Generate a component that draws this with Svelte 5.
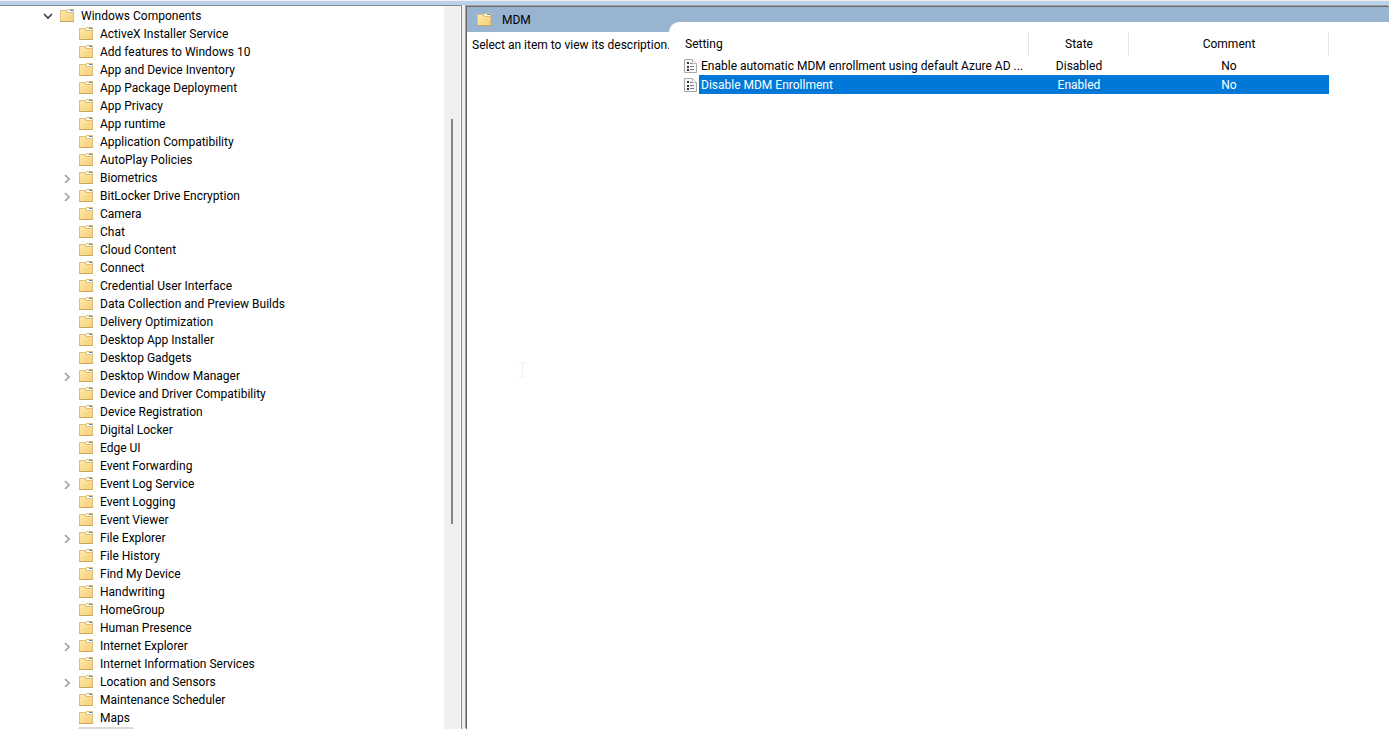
<script>
	const items = [
		'ActiveX Installer Service',
		'Add features to Windows 10',
		'App and Device Inventory',
		'App Package Deployment',
		'App Privacy',
		'App runtime',
		'Application Compatibility',
		'AutoPlay Policies',
		'Biometrics',
		'BitLocker Drive Encryption',
		'Camera',
		'Chat',
		'Cloud Content',
		'Connect',
		'Credential User Interface',
		'Data Collection and Preview Builds',
		'Delivery Optimization',
		'Desktop App Installer',
		'Desktop Gadgets',
		'Desktop Window Manager',
		'Device and Driver Compatibility',
		'Device Registration',
		'Digital Locker',
		'Edge UI',
		'Event Forwarding',
		'Event Log Service',
		'Event Logging',
		'Event Viewer',
		'File Explorer',
		'File History',
		'Find My Device',
		'Handwriting',
		'HomeGroup',
		'Human Presence',
		'Internet Explorer',
		'Internet Information Services',
		'Location and Sensors',
		'Maintenance Scheduler',
		'Maps'
	];
	const expandable = [
		'Biometrics',
		'BitLocker Drive Encryption',
		'Desktop Window Manager',
		'Event Log Service',
		'File Explorer',
		'Internet Explorer',
		'Location and Sensors'
	];
	const settings = [
		{ name: 'Enable automatic MDM enrollment using default Azure AD ...', state: 'Disabled', comment: 'No' },
		{ name: 'Disable MDM Enrollment', state: 'Enabled', comment: 'No' }
	];

	let open = $state(true);
	let selected = $state(1);
</script>

{#snippet folder()}
	<svg class="folder" width="16" height="16" viewBox="0 0 16 16" aria-hidden="true">
		<defs>
			<linearGradient id="fill" x1="0" y1="0" x2="1" y2="1">
				<stop offset="0" stop-color="#ffe9ab" />
				<stop offset="1" stop-color="#f5d078" />
			</linearGradient>
		</defs>
		<path d="M7.5 5.5v-3l1-1h6v4" fill="#f4e2b0" stroke="#d9bd7c" />
		<path d="M9 2h5v2H9z" fill="#fff" />
		<path d="M11 2h3v1h-3z" fill="#3b93df" />
		<path d="M1.5 2.5h5l1.5 2h6.5v9h-13z" fill="url(#fill)" stroke="#dfc07a" />
		<path d="M1 13.5h14" fill="none" stroke="#c9a65a" />
	</svg>
{/snippet}

<main>
	<nav class="tree" aria-label="Policy folders">
		<div class="nodes">
			<div class="node root">
				<button class="toggle" aria-label="Toggle Windows Components" aria-expanded={open} onclick={() => (open = !open)}>
					<svg width="10" height="10" viewBox="0 0 10 10"><path d="M1 3l4 4 4-4" fill="none" stroke="#404040" stroke-width="1.7" /></svg>
				</button>
				{@render folder()}
				<span>Windows Components</span>
			</div>
			{#if open}
				<ul>
					{#each items as item}
						<li class="node">
							{#if expandable.includes(item)}
								<button class="toggle" aria-label="Expand {item}">
									<svg width="10" height="10" viewBox="0 0 10 10"><path d="M3 2l4 4-4 4" fill="none" stroke="#a0a0a0" stroke-width="1.7" /></svg>
								</button>
							{:else}
								<span class="toggle"></span>
							{/if}
							{@render folder()}
							<span>{item}</span>
						</li>
					{/each}
					<li class="node"><span class="toggle"></span><span class="current"></span></li>
				</ul>
			{/if}
		</div>
		<div class="scrollbar">
			<div class="thumb"></div>
		</div>
	</nav>

	<section class="content">
		<header>
			{@render folder()}
			<span>MDM</span>
		</header>
		<div class="body">
			<p>Select an item to view its description.</p>
			<div class="list">
				<table>
					<thead>
						<tr>
							<th class="name">Setting</th>
							<th class="state">State</th>
							<th class="comment">Comment</th>
						</tr>
					</thead>
					<tbody>
						{#each settings as setting, i}
							<tr class:selected={selected === i} onclick={() => (selected = i)}>
								<td>
									<div class="setting">
										<svg width="14" height="16" viewBox="0 0 14 16" aria-hidden="true">
											<path d="M.5 1.5h8l4 4v9H.5z" fill="#fafafa" stroke="#a8a8a8" />
											<path d="M8.5 1.5v4h4" fill="#fff" stroke="#b8b8b8" />
											<path d="M3 4h2v2H3zM3 8h2v2H3zM3 11h2v2H3z" fill="#333" />
											<path d="M6 5.5h2M6 8.5h4M6 11.5h4" stroke="#7c7599" />
										</svg>
										<span>{setting.name}</span>
									</div>
								</td>
								<td>{setting.state}</td>
								<td>{setting.comment}</td>
							</tr>
						{/each}
					</tbody>
				</table>
			</div>
			<svg class="cursor" width="7" height="16" viewBox="0 0 7 16" aria-hidden="true">
				<path d="M0 .5h3M4 .5h3M3.5 1v14M0 15.5h3M4 15.5h3" stroke="#f0f0f0" />
			</svg>
		</div>
	</section>
</main>

<style>
	:global(body) {
		margin: 0;
	}
	main {
		box-sizing: border-box;
		display: grid;
		grid-template-columns: 462px minmax(0, 1fr);
		column-gap: 4px;
		height: 100vh;
		overflow: hidden;
		padding-top: 5px;
		background: linear-gradient(#f0f0f0 1px, #b9d1ea 1px, #b9d1ea 5px, #f0f0f0 5px);
		color: #000;
		font: 12px/18px Roboto, "Open Sans", sans-serif;
	}
	.tree {
		display: flex;
		min-height: 0;
		border-top: 1px solid #828790;
		border-right: 1px solid #828790;
		background: #fff;
	}
	.nodes {
		flex: 1;
		overflow: hidden;
		padding-top: 1px;
	}
	ul {
		list-style: none;
		margin: 0;
		padding: 0;
	}
	.node {
		display: flex;
		align-items: center;
		height: 18px;
		padding-left: 60px;
		white-space: nowrap;
	}
	.root {
		padding-left: 41px;
	}
	.toggle {
		display: flex;
		align-items: center;
		justify-content: center;
		width: 14px;
		height: 18px;
		margin-right: 4px;
		padding: 0;
		border: 0;
		background: none;
	}
	.folder {
		flex: none;
		margin-right: 6px;
	}
	.current {
		align-self: stretch;
		width: 56px;
		border-radius: 2px;
		background: #d9d9d9;
	}
	.scrollbar {
		width: 16px;
		margin-right: 1px;
		background: #f0f0f0;
	}
	.thumb {
		width: 2px;
		height: 56%;
		margin: 113px 0 0 7px;
		background: #858585;
	}
	.content {
		display: flex;
		flex-direction: column;
		min-height: 0;
		margin-top: 1px;
		border-top: 1px solid #696969;
		border-left: 1px solid #696969;
		box-shadow: -1px -1px 0 #a0a0a0;
		background: #fff;
	}
	header {
		display: flex;
		align-items: center;
		height: 25px;
		padding-left: 9px;
		background: #99b4d1;
	}
	header .folder {
		margin-right: 10px;
	}
	.body {
		position: relative;
		display: flex;
		flex: 1;
		min-height: 0;
	}
	p {
		flex: none;
		width: 197px;
		margin: 0;
		padding: 4px 0 0 5px;
		white-space: nowrap;
	}
	.list {
		flex: 1;
		min-width: 0;
		margin-top: -10px;
		padding: 10px 60px 0 15px;
		border-top-left-radius: 10px;
		background: #fff;
	}
	table {
		width: 100%;
		table-layout: fixed;
		border-collapse: collapse;
	}
	th,
	td {
		padding: 0;
		font-weight: normal;
		text-align: center;
	}
	th {
		height: 24px;
		box-shadow: inset -1px 0 #e5e5e5;
	}
	td {
		height: 19px;
	}
	.name {
		padding-left: 1px;
		text-align: left;
	}
	.state {
		width: 100px;
	}
	.comment {
		width: 200px;
	}
	.setting {
		display: flex;
		align-items: center;
		gap: 1px;
		text-align: left;
	}
	.setting svg {
		flex: none;
	}
	.setting span {
		flex: 1;
		overflow: hidden;
		padding: 1px 0 0 2px;
		text-overflow: ellipsis;
		white-space: nowrap;
	}
	.selected .setting span,
	.selected td + td {
		background: #0078d7;
		color: #fff;
	}
	.cursor {
		position: absolute;
		top: 330px;
		left: 52px;
	}
</style>
